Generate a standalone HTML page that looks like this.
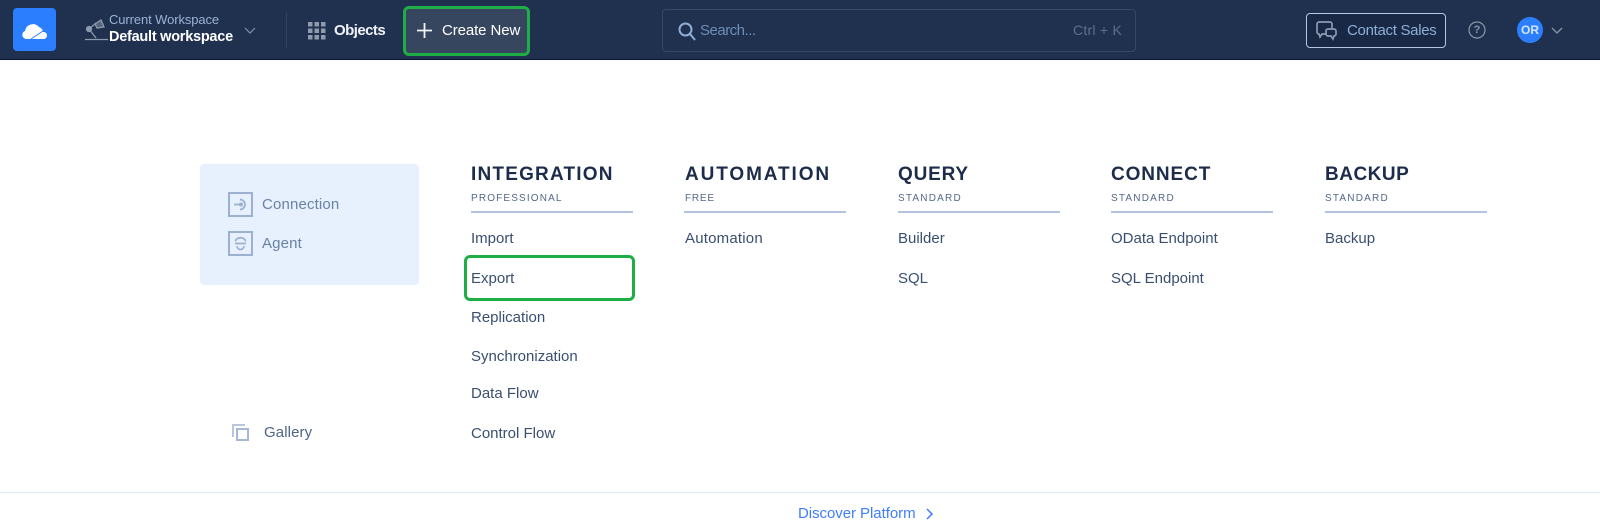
<!DOCTYPE html>
<html><head><meta charset="utf-8"><style>
html,body{margin:0;padding:0;background:#fff}
#p{position:relative;width:1600px;height:532px;overflow:hidden;background:#fff;font-family:"Liberation Sans",sans-serif}
.t{position:absolute;white-space:nowrap;line-height:18px;height:18px;font-size:15px;color:#3a4f70}
.h{position:absolute;white-space:nowrap;font-size:19px;line-height:22px;font-weight:bold;color:#1c2c4a;top:164px}
.s{position:absolute;white-space:nowrap;font-size:10px;line-height:12px;color:#54688a;letter-spacing:1.2px;top:193px}
.l{position:absolute;height:2px;top:211px;width:162px;background:#b3c4e2}
svg{position:absolute;overflow:visible}
</style></head><body><div id="p">
<div style="position:absolute;left:0;top:0;width:1600px;height:60px;background:#1f314e;border-bottom:1px solid #0b1730;box-sizing:border-box"></div>
<div style="position:absolute;left:13px;top:8px;width:43px;height:43px;background:#2b7fff;border-radius:4px"></div>
<svg style="left:13px;top:8px" width="43" height="43" viewBox="0 0 43 43"><path d="M11 30a4 4 0 0 1 1-7 8 8 0 0 1 14-4 6 6 0 0 1 4 5 3.500 3.500 0 0 1 1 7H13a3 3 0 0 1-2-1z" fill="#fff"/><path d="M18 31l12-8" stroke="#2b7fff" stroke-width="1"/></svg>
<svg style="left:85px;top:20px" width="24" height="21" viewBox="0 0 24 21" fill="none" stroke="#8d99ac" stroke-width="1.300"><path d="M0 19.500h23"/><path d="M4 9l7 9M4 9l7-6"/><path d="M10 4l6-4 3 7-7 1z" fill="#8d99ac" fill-opacity=".5"/><circle cx="4" cy="9" r="2.500" fill="#8d99ac"/></svg>
<div class="t" style="left:109px;top:11px;font-size:13px;color:#9db3d4;letter-spacing:-.1px">Current Workspace</div>
<div class="t" style="left:109px;top:28px;font-size:14.500px;font-weight:bold;color:#fff;letter-spacing:-.25px">Default workspace</div>
<svg style="left:244px;top:27px" width="12" height="7" viewBox="0 0 12 7" fill="none" stroke="#7f90aa" stroke-width="1.200"><path d="M1 1l5 5 5-5"/></svg>
<div style="position:absolute;left:286px;top:13px;width:1px;height:35px;background:#33445f"></div>
<svg style="left:308px;top:22px" width="18" height="18" viewBox="0 0 18 18" fill="#8f9bad"><rect width="4.500" height="4.500"/><rect x="6.500" width="4.500" height="4.500"/><rect x="13" width="4.500" height="4.500"/><rect y="6.500" width="4.500" height="4.500"/><rect x="6.500" y="6.500" width="4.500" height="4.500"/><rect x="13" y="6.500" width="4.500" height="4.500"/><rect y="13" width="4.500" height="4.500"/><rect x="6.500" y="13" width="4.500" height="4.500"/><rect x="13" y="13" width="4.500" height="4.500"/></svg>
<div class="t" style="left:334px;top:22px;font-size:15px;font-weight:bold;color:#f0f3f8;letter-spacing:-.55px">Objects</div>
<div style="position:absolute;left:403px;top:6px;width:127px;height:50px;box-sizing:border-box;border:3px solid #1fae45;border-radius:6px;background:#36465f"></div>
<svg style="left:416px;top:22px" width="17" height="17" viewBox="0 0 17 17" stroke="#f0f3f8" stroke-width="1.800"><path d="M8.500 1v15M1 8.500h15"/></svg>
<div class="t" style="left:442px;top:22px;font-size:15px;color:#fff;letter-spacing:-.1px">Create New</div>
<div style="position:absolute;left:662px;top:9px;width:474px;height:43px;box-sizing:border-box;border:1px solid #35486a;border-radius:4px"></div>
<svg style="left:678px;top:22px" width="18" height="19" viewBox="0 0 18 19" fill="none" stroke="#8faed6" stroke-width="2"><circle cx="7.500" cy="7.500" r="6"/><path d="M12 12l5 6"/></svg>
<div class="t" style="left:700px;top:22px;font-size:15px;color:#6f8db8;letter-spacing:-.5px">Search...</div>
<div class="t" style="left:1073px;top:21px;font-size:14px;color:#5d6f8c;letter-spacing:.25px">Ctrl + K</div>
<div style="position:absolute;left:1306px;top:13px;width:140px;height:35px;box-sizing:border-box;border:1px solid #b5c6e3;border-radius:4px;background:#182845"></div>
<svg style="left:1316px;top:21px" width="21" height="19" viewBox="0 0 21 19" fill="none" stroke="#8b9ab2" stroke-width="1.700"><path d="M10 13H6l-2 3-1-3a2 2 0 0 1-2-2V3a2 2 0 0 1 2-2h11a2 2 0 0 1 2 2v4"/><path d="M12 8h6a2 2 0 0 1 2 2v3a2 2 0 0 1-2 2l-1 3-2-3h-3a2 2 0 0 1-2-2v-3a2 2 0 0 1 2-2z"/></svg>
<div class="t" style="left:1347px;top:22px;font-size:15px;color:#8faed6;letter-spacing:-.3px">Contact Sales</div>
<svg style="left:1468px;top:21px" width="18" height="18" viewBox="0 0 18 18" fill="none" stroke="#8a97ab" stroke-width="1.200"><circle cx="9" cy="9" r="8"/></svg>
<div class="t" style="left:1468px;top:21px;width:18px;text-align:center;font-size:11px;font-weight:bold;color:#8a97ab">?</div>
<div style="position:absolute;left:1517px;top:17px;width:26px;height:26px;border-radius:50%;background:#2b7fff;color:#d7e6ff;font-size:12px;font-weight:bold;line-height:26px;text-align:center">OR</div>
<svg style="left:1551px;top:27px" width="12" height="7" viewBox="0 0 12 7" fill="none" stroke="#8a97ab" stroke-width="1.300"><path d="M1 1l5 5 5-5"/></svg>

<div style="position:absolute;left:200px;top:164px;width:219px;height:121px;background:#e7f1fe;border-radius:4px"></div>
<svg style="left:228px;top:192px" width="25" height="25" viewBox="0 0 25 25" fill="none" stroke="#9cb0d0" stroke-width="2"><rect x="1" y="1" width="23" height="23"/><path d="M12 7.500a5 5 0 1 1 0 10M6 12.500h7" stroke-width="1.700"/><circle cx="13" cy="12.500" r="2" fill="#9cb0d0" stroke="none"/></svg>
<div class="t" style="left:262px;top:196px;font-size:15px;color:#6a80a6;letter-spacing:.15px">Connection</div>
<svg style="left:228px;top:231px" width="25" height="25" viewBox="0 0 25 25" fill="none" stroke="#9cb0d0" stroke-width="2"><rect x="1" y="1" width="23" height="23"/><path d="M7.500 10.500c0-5 10-5 10 0M7 12.500h11M9 15a3.500 3.500 0 0 0 7 0" stroke-width="1.700"/></svg>
<div class="t" style="left:262px;top:235px;font-size:15px;color:#6a80a6;letter-spacing:.15px">Agent</div>
<svg style="left:232px;top:424px" width="17" height="17" viewBox="0 0 17 17" fill="none" stroke="#a7b8d6" stroke-width="2"><path d="M1 13V1h12" opacity=".8"/><rect x="5" y="5" width="11" height="11"/></svg>
<div class="t" style="left:264px;top:424px;font-size:15px;color:#4e6489;letter-spacing:.1px">Gallery</div>

<div class="h" style="left:471px;letter-spacing:1.200px">INTEGRATION</div><div class="s" style="left:471px;letter-spacing:1.150px">PROFESSIONAL</div><div class="l" style="left:471px"></div>
<div class="h" style="left:685px;letter-spacing:1.900px">AUTOMATION</div><div class="s" style="left:685px;letter-spacing:.8px">FREE</div><div class="l" style="left:684px"></div>
<div class="h" style="left:898px;letter-spacing:.8px">QUERY</div><div class="s" style="left:898px">STANDARD</div><div class="l" style="left:898px"></div>
<div class="h" style="left:1111px;letter-spacing:.9px">CONNECT</div><div class="s" style="left:1111px">STANDARD</div><div class="l" style="left:1111px"></div>
<div class="h" style="left:1325px;letter-spacing:.5px">BACKUP</div><div class="s" style="left:1325px">STANDARD</div><div class="l" style="left:1325px"></div>

<div style="position:absolute;left:464px;top:255px;width:171px;height:46px;box-sizing:border-box;border:3px solid #1fae45;border-radius:6px"></div>
<div class="t" style="left:471px;top:230px">Import</div>
<div class="t" style="left:471px;top:270px">Export</div>
<div class="t" style="left:471px;top:309px">Replication</div>
<div class="t" style="left:471px;top:348px">Synchronization</div>
<div class="t" style="left:471px;top:385px">Data Flow</div>
<div class="t" style="left:471px;top:425px">Control Flow</div>
<div class="t" style="left:685px;top:230px;letter-spacing:.2px">Automation</div>
<div class="t" style="left:898px;top:230px">Builder</div>
<div class="t" style="left:898px;top:270px">SQL</div>
<div class="t" style="left:1111px;top:230px">OData Endpoint</div>
<div class="t" style="left:1111px;top:270px">SQL Endpoint</div>
<div class="t" style="left:1325px;top:230px">Backup</div>

<div style="position:absolute;left:0;top:492px;width:1600px;height:1px;background:#dfe8fb"></div>
<div class="t" style="left:798px;top:505px;font-size:15px;color:#3f7efb;letter-spacing:-.05px">Discover Platform</div>
<svg style="left:926px;top:508px" width="8" height="12" viewBox="0 0 8 12" fill="none" stroke="#3f7efb" stroke-width="1.500"><path d="M1 1l5 5-5 5"/></svg>
</div></body></html>
